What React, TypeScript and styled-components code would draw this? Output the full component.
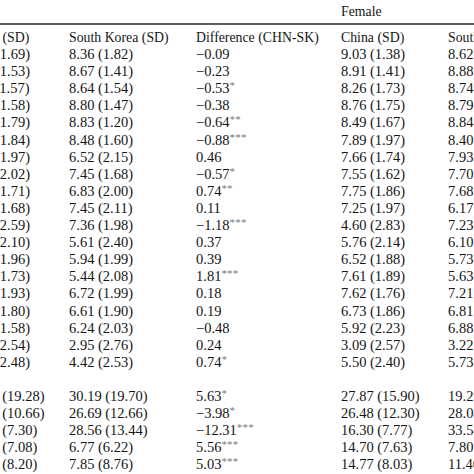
import React from 'react';
import styled, { createGlobalStyle } from 'styled-components';

const GlobalStyle = createGlobalStyle`
    html, body {
        margin: 0;
        padding: 0;
        background: #ffffff;
    }
    body {
        font-family: "Liberation Serif", "Times New Roman", serif;
        color: #151515;
    }
`;

const Page = styled.div`
    width: 474px;
    height: 474px;
    overflow: hidden;
    background: #ffffff;
`;

const Table = styled.div`
    margin-left: -34px;
    width: 560px;
`;

const Row = styled.div<{ $height?: number }>`
    display: grid;
    grid-template-columns: 103px 127px 145px 107px 1fr;
    height: ${(p) => p.$height ?? 17.1}px;
    line-height: ${(p) => p.$height ?? 17.1}px;
    white-space: nowrap;
`;

const GroupRow = styled(Row)`
    border-bottom: 2px solid #5c5c5c;
`;

const HeadRow = styled(Row)`
    padding-top: 4px;
`;

const Cell = styled.div`
    font-size: 14.5px;
    overflow: visible;
`;

const HeadCell = styled(Cell)`
    font-size: 13.8px;
`;

const GroupCell = styled(HeadCell)<{ $col: number }>`
    grid-column: ${(p) => p.$col};
`;

const Star = styled.span`
    font-size: 11px;
    color: #7a7a7a;
    vertical-align: 4px;
    line-height: 0;
    letter-spacing: 0.2px;
`;

type Line = [string, string, string, string, string] | null;

const rows: Line[] = [
    ['8.27 (1.69)', '8.36 (1.82)', '−0.09', '9.03 (1.38)', '8.62 (1.49)'],
    ['8.44 (1.53)', '8.67 (1.41)', '−0.23', '8.91 (1.41)', '8.88 (1.33)'],
    ['8.11 (1.57)', '8.64 (1.54)', '−0.53*', '8.26 (1.73)', '8.74 (1.50)'],
    ['8.42 (1.58)', '8.80 (1.47)', '−0.38', '8.76 (1.75)', '8.79 (1.42)'],
    ['8.19 (1.79)', '8.83 (1.20)', '−0.64**', '8.49 (1.67)', '8.84 (1.38)'],
    ['7.60 (1.84)', '8.48 (1.60)', '−0.88***', '7.89 (1.97)', '8.40 (1.61)'],
    ['6.98 (1.97)', '6.52 (2.15)', '0.46', '7.66 (1.74)', '7.93 (1.80)'],
    ['6.88 (2.02)', '7.45 (1.68)', '−0.57*', '7.55 (1.62)', '7.70 (1.72)'],
    ['7.57 (1.71)', '6.83 (2.00)', '0.74**', '7.75 (1.86)', '7.68 (1.90)'],
    ['7.56 (1.68)', '7.45 (2.11)', '0.11', '7.25 (1.97)', '6.17 (2.21)'],
    ['6.18 (2.59)', '7.36 (1.98)', '−1.18***', '4.60 (2.83)', '7.23 (2.02)'],
    ['5.98 (2.10)', '5.61 (2.40)', '0.37', '5.76 (2.14)', '6.10 (2.30)'],
    ['6.33 (1.96)', '5.94 (1.99)', '0.39', '6.52 (1.88)', '5.73 (2.05)'],
    ['7.25 (1.73)', '5.44 (2.08)', '1.81***', '7.61 (1.89)', '5.63 (2.11)'],
    ['6.90 (1.93)', '6.72 (1.99)', '0.18', '7.62 (1.76)', '7.21 (1.88)'],
    ['6.80 (1.80)', '6.61 (1.90)', '0.19', '6.73 (1.86)', '6.81 (1.93)'],
    ['5.76 (1.58)', '6.24 (2.03)', '−0.48', '5.92 (2.23)', '6.88 (2.01)'],
    ['3.19 (2.54)', '2.95 (2.76)', '0.24', '3.09 (2.57)', '3.22 (2.64)'],
    ['5.16 (2.48)', '4.42 (2.53)', '0.74*', '5.50 (2.40)', '5.73 (2.38)'],
    null,
    ['35.82 (19.28)', '30.19 (19.70)', '5.63*', '27.87 (15.90)', '19.29 (17.40)'],
    ['22.71 (10.66)', '26.69 (12.66)', '−3.98*', '26.48 (12.30)', '28.04 (12.90)'],
    ['16.25 (7.30)', '28.56 (13.44)', '−12.31***', '16.30 (7.77)', '33.54 (13.20)'],
    ['12.33 (7.08)', '6.77 (6.22)', '5.56***', '14.70 (7.63)', '7.80 (6.80)'],
    ['12.88 (8.20)', '7.85 (8.76)', '5.03***', '14.77 (8.03)', '11.46 (9.10)'],
];

const Value = ({ text }: { text: string }) => {
    const m = text.match(/^([^*]*)(\**)$/);
    const base = m ? m[1] : text;
    const stars = m ? m[2] : '';
    return (
        <Cell>
            {base}
            {stars && <Star>{stars}</Star>}
        </Cell>
    );
};

const App = () => {
    return (
        <Page>
            <GlobalStyle />
            <Table>
                <GroupRow $height={23}>
                    <GroupCell $col={4}>Female</GroupCell>
                </GroupRow>
                <HeadRow>
                    <HeadCell>China (SD)</HeadCell>
                    <HeadCell>South Korea (SD)</HeadCell>
                    <HeadCell>Difference (CHN-SK)</HeadCell>
                    <HeadCell>China (SD)</HeadCell>
                    <HeadCell>South Korea (SD)</HeadCell>
                </HeadRow>
                {rows.map((r, i) =>
                    r ? (
                        <Row key={i}>
                            {r.map((v, j) => (
                                <Value key={j} text={v} />
                            ))}
                        </Row>
                    ) : (
                        <Row key={i} />
                    )
                )}
            </Table>
        </Page>
    );
};

export default App;
